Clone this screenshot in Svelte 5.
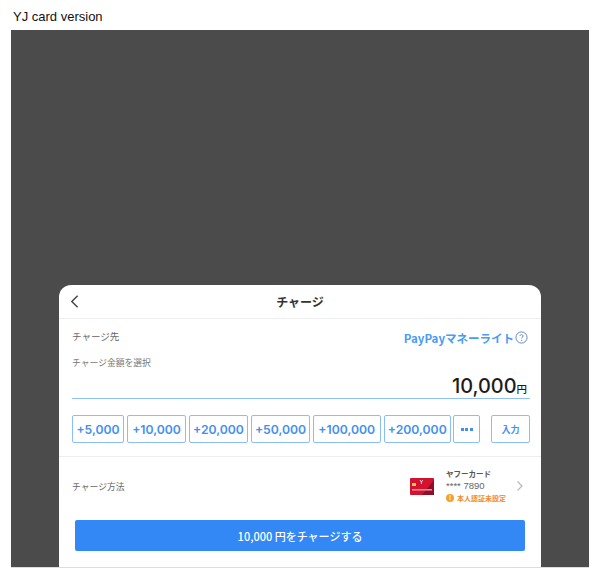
<script>
    const amounts = ['+5,000', '+10,000', '+20,000', '+50,000', '+100,000', '+200,000'];
</script>

<div class="page">
    <p class="caption">YJ card version</p>

    <div class="overlay">
        <section class="sheet">
            <header class="sheet-head">
                <svg class="back" viewBox="0 0 10 16" width="9" height="15" aria-hidden="true">
                    <path d="M8.5 1.5 2 8l6.5 6.5" fill="none" stroke="#444" stroke-width="1.6"/>
                </svg>
                <h1>チャージ</h1>
            </header>

            <div class="target">
                <span class="label">チャージ先</span>
                <span class="target-name">
                    PayPayマネーライト
                    <svg viewBox="0 0 14 14" width="13" height="13" aria-hidden="true">
                        <circle cx="7" cy="7" r="6" fill="none" stroke="#5f80b8" stroke-width="1"/>
                        <path d="M5.3 5.5c0-1 .8-1.6 1.7-1.6s1.7.6 1.7 1.5c0 1.2-1.6 1.3-1.6 2.6" fill="none" stroke="#5f80b8" stroke-width="1"/>
                        <circle cx="7.1" cy="10" r=".7" fill="#5f80b8"/>
                    </svg>
                </span>
            </div>

            <div class="amount-block">
                <div class="small-label">チャージ金額を選択</div>
                <div class="amount">10,000<small>円</small></div>
            </div>

            <div class="chips">
                {#each amounts as a}
                    <button class="chip">{a}</button>
                {/each}
                <button class="chip more" aria-label="more"><i></i><i></i><i></i></button>
                <button class="chip input">入力</button>
            </div>

            <div class="method">
                <span class="label">チャージ方法</span>
                <div class="card-info">
                    <svg class="card" viewBox="0 0 24 17" width="24" height="17" aria-hidden="true">
                        <rect width="24" height="17" rx="1" fill="#d3122f"/>
                        <path d="M24 2 12 17h12z" fill="#8f0f28"/>
                        <rect x="2" y="5" width="4" height="3" fill="#e8c65a"/>
                        <rect x="2" y="11" width="20" height="1.6" fill="#e98a96"/>
                        <path d="M10 2l1.4 2 1.4-2M11.4 4v2" fill="none" stroke="#fff" stroke-width=".8"/>
                    </svg>
                    <div class="card-text">
                        <strong>ヤフーカード</strong>
                        <span class="num">**** 7890</span>
                        <span class="warn"><em>!</em>本人認証未設定</span>
                    </div>
                    <svg class="chev" viewBox="0 0 8 12" width="8" height="12" aria-hidden="true">
                        <path d="M1.5 1.5 6 6l-4.5 4.5" fill="none" stroke="#bbb" stroke-width="1.3"/>
                    </svg>
                </div>
            </div>

            <div class="action">
                <button class="charge">10,000 円をチャージする</button>
            </div>
        </section>
    </div>
</div>

<style>
    :global(body) {
        background: #fff;
    }

    .page {
        height: 583px;
        font-family: "Liberation Sans", "Noto Sans CJK JP", sans-serif;
        overflow: hidden;
    }

    .caption {
        margin: 0;
        padding: 9px 0 0 13px;
        height: 21px;
        font-size: 13px;
        line-height: 15px;
        color: #111;
    }

    .overlay {
        margin: 0 11px;
        height: 538px;
        background: #4b4b4b;
        border-bottom: 1px solid #ddd;
        box-sizing: border-box;
        display: flex;
        flex-direction: column;
        justify-content: flex-end;
        padding: 0 48px;
    }

    .sheet {
        background: #fff;
        border-radius: 12px 12px 0 0;
        height: 282px;
        font-family: "Noto Sans CJK JP", "Liberation Sans", sans-serif;
    }

    .sheet-head {
        height: 33px;
        border-bottom: 1px solid #eee;
        display: flex;
        align-items: center;
        justify-content: center;
        position: relative;
    }

    .back {
        position: absolute;
        left: 11px;
        top: 9px;
    }

    h1 {
        margin: 0;
        font-size: 12px;
        font-weight: 700;
        color: #333;
    }

    .target {
        display: flex;
        justify-content: space-between;
        align-items: center;
        height: 37px;
        padding: 0 13px;
    }

    .target .label {
        margin-bottom: 4px;
    }

    .label {
        font-size: 9.5px;
        color: #666;
    }

    .target-name {
        display: flex;
        align-items: center;
        gap: 1px;
        font-family: "Noto Sans CJK JP", sans-serif;
        font-size: 11.5px;
        font-weight: 700;
        color: #4a9bf5;
        white-space: nowrap;
    }

    .amount-block {
        margin: 0 11px 0 13px;
        border-bottom: 1px solid #8fc0fb;
    }

    .small-label {
        font-size: 8.8px;
        line-height: 12px;
        margin-top: 1px;
        color: #777;
    }

    .amount {
        text-align: right;
        font-family: "Inter", "Liberation Sans", sans-serif;
        font-size: 19.9px;
        font-weight: 500;
        height: 24px;
        line-height: 24px;
        margin-top: 5px;
        padding-right: 3px;
        color: #1c1c1c;
        white-space: nowrap;
    }

    .amount small {
        font-family: "Noto Sans CJK JP", sans-serif;
        font-size: 10.5px;
        font-weight: 500;
        line-height: 1;
    }

    .chips {
        display: flex;
        gap: 3px;
        margin: 16px 11px 0 13px;
    }

    .chip {
        height: 28px;
        width: 59px;
        padding: 0;
        background: #fff;
        border: 1px solid #8abdfb;
        border-radius: 2px;
        color: #4290f0;
        font-family: "Inter", "Liberation Sans", sans-serif;
        font-size: 12.2px;
        font-weight: 600;
        white-space: nowrap;
    }

    .chip:first-child {
        width: 52px;
    }

    .chip:nth-child(5), .chip:nth-child(6) {
        width: 67.5px;
    }

    .chip.more {
        width: 27px;
        margin-left: -1px;
        display: flex;
        align-items: center;
        justify-content: center;
        gap: 1.5px;
    }

    .more i {
        width: 3px;
        height: 3px;
        background: #4290f0;
    }

    .chip.input {
        width: 39px;
        margin-left: auto;
        font-family: "Noto Sans CJK JP", sans-serif;
        font-size: 9px;
        font-weight: 700;
    }

    .method {
        margin-top: 13px;
        border-top: 1px solid #eee;
        height: 64px;
        box-sizing: border-box;
        display: flex;
        align-items: center;
        justify-content: space-between;
        padding: 0 17px 5px 13px;
    }

    .method .label {
        font-size: 8.8px;
        color: #666;
    }

    .card-info {
        display: flex;
        align-items: center;
    }

    .card {
        margin-right: 12px;
    }

    .card-text {
        display: flex;
        flex-direction: column;
        width: 69px;
        line-height: 12px;
        font-size: 7.5px;
        color: #555;
    }

    .card-text strong {
        font-weight: 700;
    }

    .num {
        font-family: "Liberation Sans", sans-serif;
        font-size: 9.5px;
        color: #666;
    }

    .warn {
        display: flex;
        align-items: center;
        gap: 3px;
        color: #f5882a;
        font-size: 7px;
        font-weight: 700;
        white-space: nowrap;
    }

    .warn em {
        width: 8px;
        height: 8px;
        border-radius: 50%;
        background: #f5a030;
        color: #fff;
        font-size: 6px;
        line-height: 8px;
        text-align: center;
        font-style: normal;
    }

    .chev {
        margin-left: 1px;
    }

    .action {
        padding: 0 16px;
    }

    .charge {
        width: 100%;
        height: 31px;
        border: 0;
        border-radius: 2px;
        background: #3388f5;
        color: #fff;
        font-family: "Noto Sans CJK JP", sans-serif;
        font-size: 11px;
        font-weight: 500;
    }
</style>
